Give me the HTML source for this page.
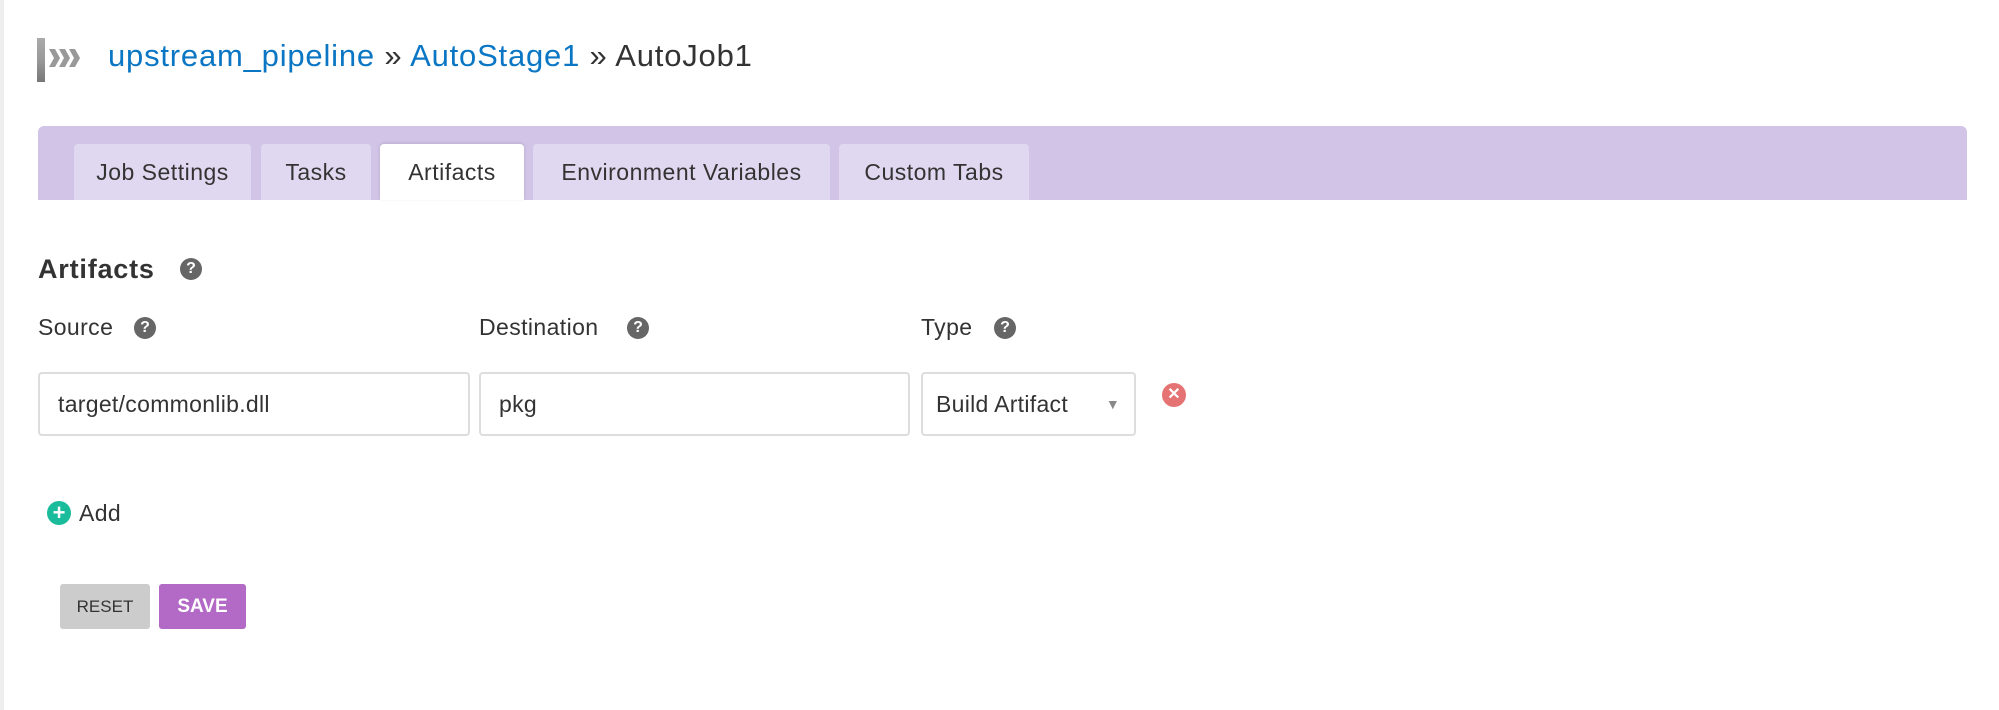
<!DOCTYPE html>
<html><head><style>
*{box-sizing:border-box;margin:0;padding:0}
body{width:1999px;height:710px;background:#fff;font-family:"Liberation Sans",sans-serif;color:#333;position:relative;overflow:hidden}
.abs{position:absolute}
.lb{left:0;top:0;width:4px;height:710px;background:#eee}
.crumb{left:108px;top:36px;font-size:31px;line-height:40px;color:#333;letter-spacing:0.8px}
.crumb a{color:#0a76c4;text-decoration:none}
.band{left:38px;top:126px;width:1929px;height:74px;background:#d1c4e7;border-radius:6px 6px 0 0}
.tab{position:absolute;top:144px;height:56px;background:#e0d8f0;border-radius:4px 4px 0 0;font-size:23px;line-height:56px;text-align:center;color:#333;letter-spacing:0.5px}
.tab.on{background:#fff;box-shadow:0 -1px 3px rgba(0,0,0,.12)}
.h{left:38px;top:252px;font-size:27px;font-weight:bold;line-height:34px;color:#333;letter-spacing:0.8px}
.q{position:absolute;width:22px;height:22px;border-radius:50%;background:#666;color:#fff;font-size:16px;font-weight:bold;line-height:22px;text-align:center}
.lab{position:absolute;top:313px;font-size:23px;line-height:28px;color:#333;letter-spacing:0.4px}
.inp{position:absolute;top:372px;height:64px;border:2px solid #ddd;border-radius:4px;background:#fff;font-size:23px;line-height:60px;padding-left:18px;color:#333;letter-spacing:0.3px}
.btn{position:absolute;top:584px;height:45px;border-radius:3px;font-size:17px;line-height:45px;text-align:center}
</style></head><body>
<div class="abs lb"></div>
<svg class="abs" style="left:36px;top:36px" width="48" height="48" viewBox="0 0 48 48">
<defs><linearGradient id="g" x1="0" y1="0" x2="0" y2="1"><stop offset="0" stop-color="#aaa"/><stop offset=".5" stop-color="#999"/><stop offset="1" stop-color="#777"/></linearGradient></defs>
<rect x="1" y="2" width="8" height="44" fill="url(#g)"/>
<polygon points="13,13 19,13 24,22 19,31 13,31 18,22" fill="#999"/>
<polygon points="23,13 29,13 34,22 29,31 23,31 28,22" fill="#999"/>
<polygon points="33,13 39,13 44,22 39,31 33,31 38,22" fill="#999"/>
</svg>
<div class="abs crumb"><a>upstream_pipeline</a> » <a>AutoStage1</a> » AutoJob1</div>
<div class="abs band"></div>
<div class="tab" style="left:74px;width:177px">Job Settings</div>
<div class="tab" style="left:261px;width:110px">Tasks</div>
<div class="tab on" style="left:380px;width:144px">Artifacts</div>
<div class="tab" style="left:533px;width:297px">Environment Variables</div>
<div class="tab" style="left:839px;width:190px">Custom Tabs</div>
<div class="abs h">Artifacts</div>
<div class="q" style="left:180px;top:258px">?</div>
<div class="lab" style="left:38px">Source</div><div class="q" style="left:134px;top:317px">?</div>
<div class="lab" style="left:479px">Destination</div><div class="q" style="left:627px;top:317px">?</div>
<div class="lab" style="left:921px">Type</div><div class="q" style="left:994px;top:317px">?</div>
<div class="inp" style="left:38px;width:432px">target/commonlib.dll</div>
<div class="inp" style="left:479px;width:431px">pkg</div>
<div class="inp" style="left:921px;width:215px;padding-left:13px">Build Artifact<span style="position:absolute;right:14px;color:#888;font-size:14px">▼</span></div>
<div class="abs" style="left:1162px;top:383px;width:24px;height:24px;border-radius:50%;background:#e57373;color:#fff;font-size:16px;font-weight:bold;line-height:24px;text-align:center">✕</div>
<div class="abs" style="left:47px;top:501px;width:24px;height:24px;border-radius:50%;background:#1abc9c;color:#fff;font-size:22px;font-weight:bold;line-height:24px;text-align:center">+</div>
<div class="abs" style="left:79px;top:499px;font-size:23px;line-height:28px;letter-spacing:0.4px">Add</div>
<div class="btn" style="left:60px;width:90px;background:#ccc;color:#333">RESET</div>
<div class="btn" style="left:159px;width:87px;background:#b36ac6;color:#fff;font-weight:bold;font-size:19px">SAVE</div>
</body></html>
